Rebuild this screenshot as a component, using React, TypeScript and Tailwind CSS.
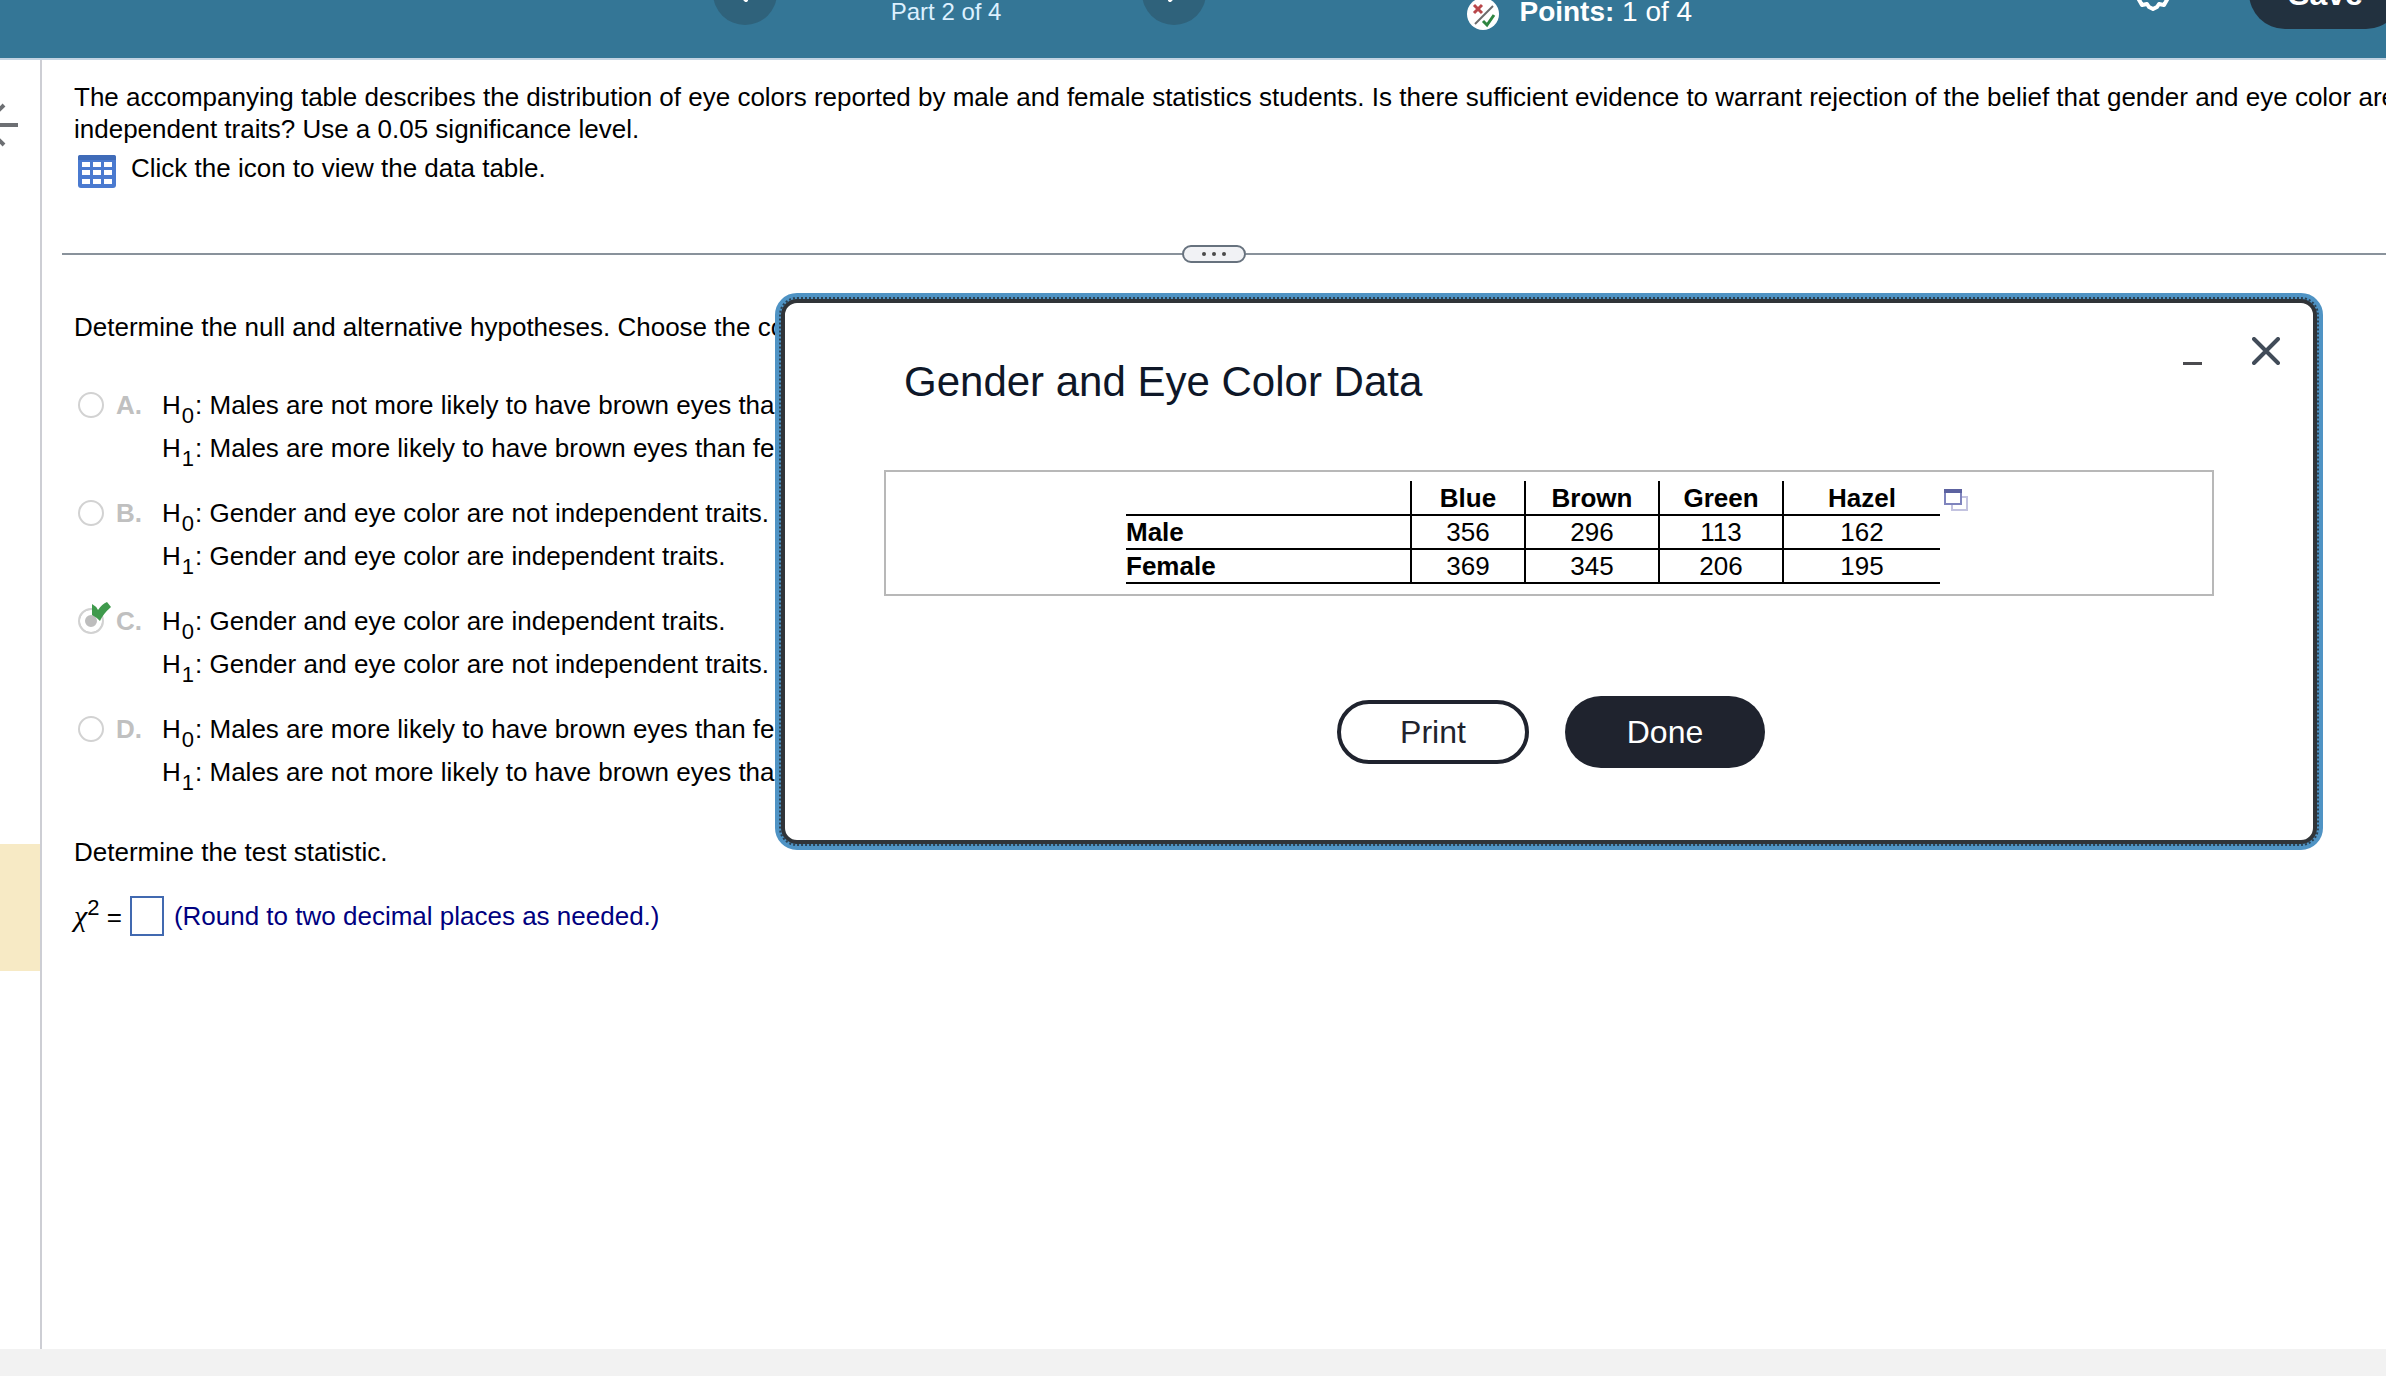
import { ReactNode } from 'react';

const choices = [
  {
    id: 'A',
    h0: 'Males are not more likely to have brown eyes than females.',
    h1: 'Males are more likely to have brown eyes than females.',
  },
  {
    id: 'B',
    h0: 'Gender and eye color are not independent traits.',
    h1: 'Gender and eye color are independent traits.',
  },
  {
    id: 'C',
    h0: 'Gender and eye color are independent traits.',
    h1: 'Gender and eye color are not independent traits.',
    correct: true,
  },
  {
    id: 'D',
    h0: 'Males are more likely to have brown eyes than females.',
    h1: 'Males are not more likely to have brown eyes than females.',
  },
];

const columns = [
  { name: 'Blue', width: 'w-[114px]' },
  { name: 'Brown', width: 'w-[134px]' },
  { name: 'Green', width: 'w-[124px]' },
  { name: 'Hazel', width: 'w-[157px]' },
];

const rows = [
  { name: 'Male', values: [356, 296, 113, 162] },
  { name: 'Female', values: [369, 345, 206, 195] },
];

const NavButton = ({ label, children }: { label: string; children: ReactNode }) => (
  <button aria-label={label} className="flex size-16 items-center justify-center rounded-full bg-[#2f627b]">
    <svg width="24" height="24" viewBox="0 0 24 24" fill="none" stroke="#fff" strokeWidth="4" strokeLinecap="round">
      {children}
    </svg>
  </button>
);

const Header = () => (
  <header className="h-[60px] overflow-hidden border-b-2 border-[#c3d3e2] bg-[#347696] text-white">
    <div className="-mt-[43px] flex h-[72px] items-center">
      <div className="flex w-[61%] items-center justify-end pr-[249px]">
        <NavButton label="Previous part">
          <path d="m13 1-9 9 9 9" />
        </NavButton>
        <span className="mt-[38px] mr-[141px] ml-[114px] text-2xl text-[#dcf0ff]">Part 2 of 4</span>
        <NavButton label="Next part">
          <path d="m8 1 9 9-9 9" />
        </NavButton>
      </div>
      <div className="mt-[38px] ml-3 flex items-center gap-5 text-[28px]">
        <svg className="mt-1" width="32" height="32" viewBox="0 0 32 32" fill="none">
          <circle cx="16" cy="16" r="16" fill="#fff" />
          <path d="M26 8 8 26" stroke="#6b6b6b" strokeWidth="2" />
          <path d="m7 7 8 8M15 7l-8 8" stroke="#b9474a" strokeWidth="3" />
          <path d="m16 23 4 4 7-10" stroke="#2e8540" strokeWidth="3" />
        </svg>
        <span>
          <b>Points:</b> 1 of 4
        </span>
      </div>
      <button aria-label="Settings" className="mr-[78px] ml-auto">
        <svg width="36" height="36" viewBox="0 0 36 36" fill="none" stroke="#fff" strokeWidth="4" strokeLinejoin="round">
          <path d="M14 1h8l2 5 5-1 4 7-4 4v3l4 4-4 7-5-1-2 3-4 2-4-2-2-3-5 1-4-7 4-4v-3l-4-4 4-7 5 1z" />
          <circle cx="18" cy="16" r="5" />
        </svg>
      </button>
      <button className="-mr-4 h-[72px] w-[153px] rounded-full bg-[#22313f] pt-[2px] text-[32px] font-bold">Save</button>
    </div>
  </header>
);

const Hypothesis = ({ index, text }: { index: number; text: string }) => (
  <p className="leading-[43px] whitespace-nowrap">
    H<sub className="bottom-0 px-px align-[-9px] text-[22px]">{index}</sub>: {text}
  </p>
);

const Choices = () => (
  <div role="radiogroup" aria-label="Hypotheses" className="mt-[41px] flex flex-col gap-[22px]">
    {choices.map((c) => (
      <div key={c.id} className="flex pl-1">
        <div className="relative mt-2 mr-3 size-[26px]">
          <input
            id={`choice-${c.id}`}
            type="radio"
            name="hypotheses"
            disabled
            defaultChecked={c.correct}
            className="block size-[26px] appearance-none rounded-full border-2 border-[#d2d2d2] bg-white checked:bg-[#bdbdbd] checked:shadow-[inset_0_0_0_5px_#fff]"
          />
          {c.correct && (
            <svg className="absolute -top-[6px] left-3" width="22" height="20" viewBox="0 0 22 20">
              <path d="M2 2q4 2 6 6 4-6 9-8l4 5q-8 7-11 14-4-4-8-6z" fill="#3f9a4c" />
            </svg>
          )}
        </div>
        <label htmlFor={`choice-${c.id}`} className="flex">
          <span className="w-[46px] leading-[43px] font-bold text-[#c0c0c0]">{c.id}.</span>
          <span>
            <Hypothesis index={0} text={c.h0} />
            <Hypothesis index={1} text={c.h1} />
          </span>
        </label>
      </div>
    ))}
  </div>
);

const DataTable = () => (
  <table className="border-collapse text-center">
    <thead>
      <tr className="h-[34px] border-b-2 border-black">
        <td className="w-[285px]" />
        {columns.map((c) => (
          <th key={c.name} scope="col" className={`border-l-2 border-black p-0 ${c.width}`}>
            {c.name}
          </th>
        ))}
      </tr>
    </thead>
    <tbody>
      {rows.map((r) => (
        <tr key={r.name} className="h-[34px] border-b-2 border-black">
          <th scope="row" className="p-0 text-left">
            {r.name}
          </th>
          {r.values.map((v, i) => (
            <td key={i} className="border-l-2 border-black p-0">
              {v}
            </td>
          ))}
        </tr>
      ))}
    </tbody>
  </table>
);

const DataDialog = () => (
  <div
    role="dialog"
    aria-labelledby="dialog-title"
    className="absolute top-[293px] right-[63px] left-[775px] rounded-[22px] border-4 border-[#4f93c4] bg-[#4f93c4]"
  >
    <div className="rounded-[18px] border-2 border-dotted border-[#2b4254]">
      <div className="rounded-2xl border-4 border-[#303438] bg-white px-[99px] pt-[51px] pb-[72px]">
        <div className="flex items-start justify-between">
          <h2 id="dialog-title" className="pl-5 text-[42px] leading-[56px] text-[#0e1728]">
            Gender and Eye Color Data
          </h2>
          <div className="-mt-[17px] -mr-[66px] flex gap-[50px]">
            <button aria-label="Minimize">
              <svg width="19" height="28" viewBox="0 0 19 28">
                <path d="M0 26.500h19" stroke="#4b4b4f" strokeWidth="3" />
              </svg>
            </button>
            <button aria-label="Close">
              <svg width="28" height="28" viewBox="0 0 28 28" stroke="#414b58" strokeWidth="4" strokeLinecap="round">
                <path d="m2 2 24 24M26 2 2 26" />
              </svg>
            </button>
          </div>
        </div>

        <div className="mt-[60px] flex items-start justify-center gap-1 border-2 border-[#b8b8b8] pt-[9px] pr-1 pb-[10px] leading-[32px]">
          <DataTable />
          <button aria-label="Open in a new window" className="mt-2">
            <svg width="24" height="22" viewBox="0 0 24 22" fill="none">
              <path d="M8 8h15v13H8z" stroke="#c3c3e0" strokeWidth="2" />
              <path d="M1 2h16v13H1z" fill="#fff" stroke="#7f84bd" strokeWidth="2" />
              <path d="M0 0h18v4H0z" fill="#5c62a0" />
            </svg>
          </button>
        </div>

        <div className="mt-[100px] flex items-center justify-center gap-9 pl-1 text-[32px]">
          <button className="h-16 w-48 rounded-full border-4 border-[#1f232e] text-[#1f232e]">Print</button>
          <button className="h-[72px] w-[200px] rounded-full bg-[#1f232e] text-white">Done</button>
        </div>
      </div>
    </div>
  </div>
);

export default function App() {
  return (
    <div className="relative flex min-h-screen flex-col overflow-hidden bg-white font-['Liberation_Sans',Arial,sans-serif] text-[26px] leading-[32px] text-black">
      <Header />

      <div className="flex flex-1">
        <aside className="w-[42px] shrink-0 border-r-2 border-[#cdced4]">
          <button aria-label="Back" className="mt-[43px] block">
            <svg width="20" height="44" viewBox="0 0 20 44" fill="none" stroke="#6d6f73" strokeWidth="4">
              <path d="M4 2-16 22 4 42M-14 22h32" />
            </svg>
          </button>
          <div className="mt-[697px] h-[127px] bg-[#f7eac5]" />
        </aside>

        <main className="min-w-0 flex-1 pt-[21px] pl-5">
          <section className="pl-3">
            <p className="whitespace-nowrap">
              The accompanying table describes the distribution of eye colors reported by male and female statistics
              students. Is there sufficient evidence to warrant rejection of the belief that gender and eye color are
              <br />
              independent traits? Use a 0.05 significance level.
            </p>
            <button className="mt-[7px] flex items-start gap-[15px] pl-1">
              <svg className="mt-[3px]" width="38" height="33" viewBox="0 0 38 33">
                <rect width="38" height="33" rx="3" fill="#4a7ad0" />
                <path d="M2 0h34q2 0 2 2v3H0V2q0-2 2-2z" fill="#3f6bb8" />
                <path
                  d="M4 7h8v5H4zM15 7h8v5h-8zM26 7h8v5h-8zM4 15h8v5H4zM15 15h8v5h-8zM26 15h8v5h-8zM4 24h8v5H4zM15 24h8v5h-8zM26 24h8v5h-8z"
                  fill="#fff"
                />
              </svg>
              Click the icon to view the data table.
            </button>
          </section>

          <div className="mt-[57px] flex items-center">
            <div className="h-[2px] flex-1 bg-[#89929b]" />
            <button
              aria-label="Resize"
              className="flex h-[18px] w-16 items-center justify-center gap-[6px] rounded-full border-2 border-[#67727e] bg-[#f1f2f5]"
            >
              <span className="size-1 rounded-full bg-[#4a4a4a]" />
              <span className="size-1 rounded-full bg-[#4a4a4a]" />
              <span className="size-1 rounded-full bg-[#4a4a4a]" />
            </button>
            <div className="h-[2px] flex-1 bg-[#89929b]" />
            <div className="h-[2px] w-5 bg-[#89929b]" />
          </div>

          <section className="mt-12 pl-3">
            <p>Determine the null and alternative hypotheses. Choose the correct answer below.</p>
            <Choices />
            <p className="mt-[42px]">Determine the test statistic.</p>
            <div className="mt-7 flex items-center">
              <label htmlFor="chi">
                <i className="font-['Liberation_Serif',serif] text-[30px]">χ</i>
                <sup className="text-[22px]">2</sup> =
              </label>
              <input id="chi" className="mr-[10px] ml-2 h-10 w-[34px] border-2 border-[#4169b0] bg-white" />
              <span className="text-[#000080]">(Round to two decimal places as needed.)</span>
            </div>
          </section>
        </main>
      </div>

      <footer className="h-[27px] bg-[#f2f2f2]" />
      <DataDialog />
    </div>
  );
}
